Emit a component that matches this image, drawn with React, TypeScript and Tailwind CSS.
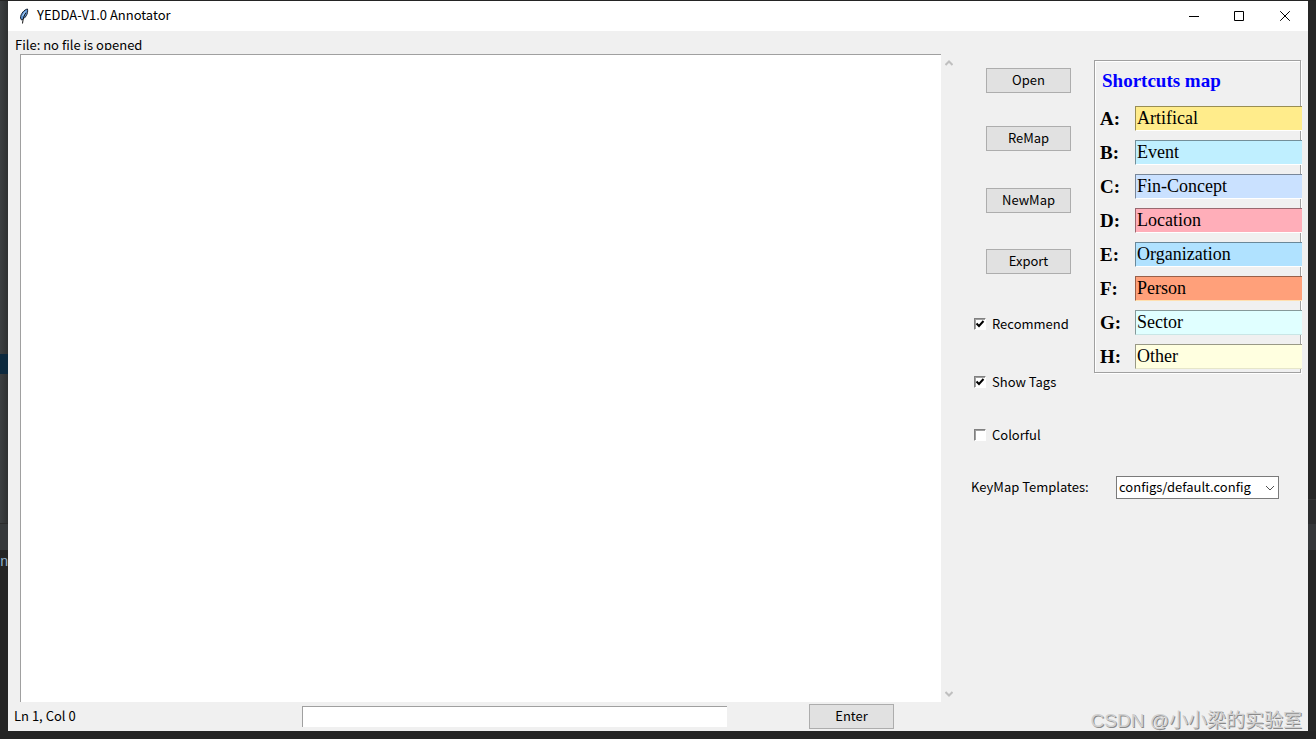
import React from "react";

const shortcuts = [
    { key: "A", name: "Artifical", color: "bg-[#ffec8b] border-t-[#998e53] border-l-[#998e53] border-b-white" },
    { key: "B", name: "Event", color: "bg-[#bfefff] border-t-[#738f99] border-l-[#738f99] border-b-white" },
    { key: "C", name: "Fin-Concept", color: "bg-[#cae1ff] border-t-[#798799] border-l-[#798799] border-b-white" },
    { key: "D", name: "Location", color: "bg-[#ffaeb9] border-t-[#99686f] border-l-[#99686f] border-b-white" },
    { key: "E", name: "Organization", color: "bg-[#b0e2ff] border-t-[#6a8899] border-l-[#6a8899] border-b-white" },
    { key: "F", name: "Person", color: "bg-[#ffa07a] border-t-[#996049] border-l-[#996049] border-b-[#ffe0b0]" },
    { key: "G", name: "Sector", color: "bg-[#e0ffff] border-t-[#869999] border-l-[#869999] border-b-[#c9e6e6]" },
    { key: "H", name: "Other", color: "bg-[#ffffe0] border-t-[#999986] border-l-[#999986] border-b-[#e6e6c9]" },
];

function TitleBar() {
    return (
        <header className="flex h-[30px] shrink-0 items-center bg-white">
            <svg className="ml-2 h-4 w-4" viewBox="0 0 16 16" fill="none">
                <path d="M11.500 1C8.500 1.500 4.500 5.500 4.500 10L5.500 12C9 10.500 12.500 6 11.500 1z" fill="#5a93d6" stroke="#1a2230"/>
                <path d="M10 4.500C8.500 6.500 7 10 6.500 15.500" stroke="#111"/>
                <path d="M9.500 3.500L6.500 8" stroke="#b5d5f2"/>
            </svg>
            <h1 className="ml-[5px] flex-1 pb-0.5">YEDDA-V1.0 Annotator</h1>
            <button type="button" aria-label="Minimize" className="flex h-full w-[46px] items-center justify-center">
                <svg className="h-[11px] w-[11px]" viewBox="0 0 11 11" stroke="#000"><path d="M1 5.500h10"/></svg>
            </button>
            <button type="button" aria-label="Maximize" className="flex h-full w-[46px] items-center justify-center">
                <svg className="h-[11px] w-[11px]" viewBox="0 0 11 11" fill="none" stroke="#000"><path d="M.5.5h9v9h-9z"/></svg>
            </button>
            <button type="button" aria-label="Close" className="flex h-full w-[46px] items-center justify-center">
                <svg className="h-[11px] w-[11px]" viewBox="0 0 11 11" stroke="#000"><path d="M.2.2l9.600 9.600M9.800.2l-9.600 9.600"/></svg>
            </button>
        </header>
    );
}

function PushButton({ label, className = "" }: { label: string; className?: string }) {
    return (
        <button type="button"
                className={`h-[25px] w-[85px] shrink-0 border border-[#adadad] bg-[#e1e1e1] pb-0.5 text-center ${className}`}>
            {label}
        </button>
    );
}

function CheckOption({ label, checked = false, className = "" }: { label: string; checked?: boolean; className?: string }) {
    return (
        <label className={`flex h-5 items-center ${className}`}>
            <span className="grid h-3 w-3 place-items-center">
                <input type="checkbox" defaultChecked={checked}
                       className="peer col-start-1 row-start-1 h-3 w-3 appearance-none border border-t-[#808080] border-l-[#808080] border-r-white border-b-white bg-white shadow-[inset_1px_1px_0_#a0a0a0]"/>
                <svg className="pointer-events-none col-start-1 row-start-1 hidden h-3 w-3 peer-checked:block"
                     viewBox="0 0 12 12" fill="none" stroke="#000" strokeWidth="2">
                    <path d="M2.500 5.500L5 8L9.500 3"/>
                </svg>
            </span>
            <span className="ml-1.5">{label}</span>
        </label>
    );
}

function ScrollBar() {
    return (
        <div className="flex w-4 shrink-0 flex-col items-center justify-between py-1">
            <svg className="h-2 w-2" viewBox="0 0 8 8" fill="none" stroke="#bfbfbf" strokeWidth="2"><path d="M.5 7l3.500-3.500l3.500 3.500"/></svg>
            <svg className="h-2 w-2" viewBox="0 0 8 8" fill="none" stroke="#bfbfbf" strokeWidth="2"><path d="M.5 2l3.500 3.500l3.500-3.500"/></svg>
        </div>
    );
}

function ShortcutsMap() {
    return (
        <section className="mt-[29px] mr-[7px] ml-[23px] h-[313px] min-w-0 flex-1 border border-[#a0a0a0] pt-2 shadow-[inset_1px_1px_0_#fff,1px_1px_0_#fff] font-['Liberation_Serif',serif]">
            <h2 className="mb-[13px] pl-[7px] text-[19px] leading-6 font-bold text-[#0000ff]">Shortcuts map</h2>
            <div className="-mr-0.5 flex flex-col gap-[9px]">
                {shortcuts.map((s) => (
                    <label key={s.key} className="flex h-[25px] items-center">
                        <span className="w-10 shrink-0 pl-[5px] text-[19px] leading-6 font-bold">{s.key}:</span>
                        <input type="text" defaultValue={s.name}
                               className={`h-[25px] min-w-0 flex-1 border-t border-b border-l pl-px text-[18px] outline-none ${s.color}`}/>
                    </label>
                ))}
            </div>
        </section>
    );
}

export default function App() {
    return (
        <div className="relative flex h-screen overflow-hidden bg-[#242424] pt-px pb-2 font-['Noto_Sans_CJK_SC',sans-serif] text-[13px] leading-5 text-black">
            {/* editor showing behind the window, left edge */}
            <div className="flex w-2 shrink-0 flex-col">
                <div className="h-[353px] bg-gradient-to-r from-[#3c3f41] to-[#2e3031]"/>
                <div className="h-5 bg-[#0d293e]"/>
                <div className="h-[149px] bg-gradient-to-r from-[#3c3f41] to-[#2e3031]"/>
                <div className="h-[27px] border-t border-[#2b2b2b] bg-[#36393b]"/>
                <div className="h-6 font-['Liberation_Mono',monospace] text-[14px] leading-6 text-[#8fb0cc]">n</div>
            </div>

            <div className="flex min-w-0 flex-1 flex-col bg-[#f0f0f0]">
                <TitleBar/>
                <main className="flex min-h-0 flex-1">
                    <div className="flex min-w-0 flex-1 flex-col">
                        <p className="h-[23px] shrink-0 pt-1 pl-[7px]">
                            <span className="block h-[15px] overflow-hidden">File: no file is opened</span>
                        </p>
                        <div className="flex min-h-0 flex-1 pl-3">
                            <textarea aria-label="Annotation text"
                                      className="min-w-0 flex-1 resize-none border-t border-l border-[#a0a0a0] bg-white outline-none"/>
                            <ScrollBar/>
                        </div>
                        <footer className="flex h-[29px] shrink-0 items-center pr-[63px] pl-1.5">
                            <span className="w-72 pb-0.5">Ln 1, Col 0</span>
                            <input type="text" aria-label="Command"
                                   className="h-[21px] min-w-0 flex-1 border-t border-l border-[#a0a0a0] bg-white px-0.5 outline-none"/>
                            <PushButton label="Enter" className="ml-[82px]"/>
                        </footer>
                    </div>

                    <aside className="w-[351px] shrink-0">
                        <div className="flex items-start">
                            <div className="flex w-[114px] shrink-0 flex-col pt-[37px] pl-[17px]">
                                <PushButton label="Open" className="ml-3"/>
                                <PushButton label="ReMap" className="mt-[33px] ml-3"/>
                                <PushButton label="NewMap" className="mt-[37px] ml-3"/>
                                <PushButton label="Export" className="mt-9 ml-3"/>
                                <CheckOption label="Recommend" checked className="mt-10"/>
                                <CheckOption label="Show Tags" checked className="mt-[38px]"/>
                                <CheckOption label="Colorful" className="mt-[33px]"/>
                            </div>
                            <ShortcutsMap/>
                        </div>
                        <div className="mt-[31px] flex items-center pl-3.5">
                            <label htmlFor="templates" className="w-[145px] pb-0.5">KeyMap Templates:</label>
                            <div className="grid w-[163px] items-center">
                                <select id="templates"
                                        className="col-start-1 row-start-1 h-[23px] appearance-none border border-[#7a7a7a] bg-white pb-0.5 pl-0.5 outline-none">
                                    <option>configs/default.config</option>
                                </select>
                                <svg className="pointer-events-none col-start-1 row-start-1 mr-1 h-2 w-2.5 justify-self-end"
                                     viewBox="0 0 10 8" fill="none" stroke="#505050"><path d="M1 2l4 4l4-4"/></svg>
                            </div>
                        </div>
                    </aside>
                </main>
            </div>

            {/* right edge */}
            <div className="flex w-2 shrink-0 flex-col bg-[#262626] pt-[498px]">
                <div className="h-[25px] border-t border-[#353535] bg-[#2b2c2e]"/>
                <div className="h-[26px] bg-[#35373a]"/>
            </div>

            <div className="absolute right-3.5 bottom-1.5 text-[19px] leading-6 whitespace-nowrap text-[#d0d0d0] [text-shadow:1px_1px_0_#8a8a8a] font-['Liberation_Sans','Noto_Sans_CJK_SC',sans-serif]">
                CSDN @小小梁的实验室
            </div>
        </div>
    );
}
